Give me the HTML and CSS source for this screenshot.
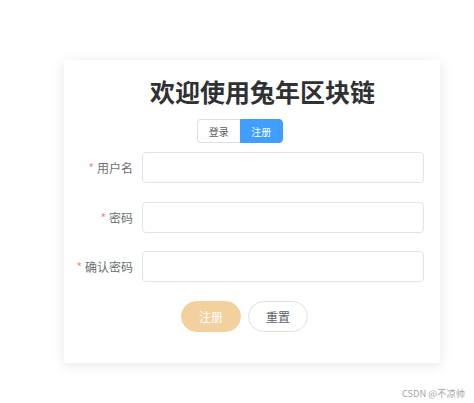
FILE: index.html
```html
<!DOCTYPE html>
<html lang="zh-CN">
<head>
<meta charset="utf-8">
<title>欢迎使用兔年区块链</title>
<link rel="stylesheet" href="styles.css">
</head>
<body>
<div class="card">
  <h1 class="title">欢迎使用兔年区块链</h1>
  <div class="tabs">
    <div class="tab tab-left">登录</div>
    <div class="tab tab-right active">注册</div>
  </div>
  <div class="form">
    <div class="row">
      <label class="label"><span class="req">*</span>用户名</label>
      <div class="input"></div>
    </div>
    <div class="row">
      <label class="label"><span class="req">*</span>密码</label>
      <div class="input"></div>
    </div>
    <div class="row">
      <label class="label"><span class="req">*</span>确认密码</label>
      <div class="input"></div>
    </div>
    <div class="actions">
      <button class="btn btn-primary" type="button">注册</button>
      <button class="btn btn-plain" type="button">重置</button>
    </div>
  </div>
</div>
<div class="watermark">CSDN @不凉帅</div>
</body>
</html>
```
FILE: styles.css
```css
html, body {
  margin: 0;
  padding: 0;
  background: #fff;
  font-family: "Noto Sans CJK SC", "Noto Sans", sans-serif;
}
.card {
  margin: 60px 0 0 64px;
  width: 376px;
  height: 303px;
  box-sizing: border-box;
  background: #fff;
  box-shadow: 0 2px 12px rgba(0, 0, 0, 0.1);
  padding-top: 19px;
}
.title {
  margin: 0;
  font-size: 25px;
  line-height: 25px;
  font-weight: 700;
  color: #303133;
  text-align: center;
  padding-left: 21px;
}
.tabs {
  display: flex;
  margin: 15px 0 0 133px;
  width: 86px;
  height: 24px;
}
.tab {
  flex: 1;
  display: flex;
  align-items: center;
  justify-content: center;
  font-size: 10px;
  color: #606266;
  background: #fff;
  border: 1px solid #dcdfe6;
  box-sizing: border-box;
}
.tab-left {
  border-right: none;
  border-radius: 4px 0 0 4px;
}
.tab-right {
  border-radius: 0 4px 4px 0;
}
.tab.active {
  background: #409eff;
  border-color: #409eff;
  color: #fff;
}
.form {
  margin-top: 9px;
  display: flex;
  flex-direction: column;
  gap: 18.5px;
}
.row {
  display: flex;
  align-items: center;
  height: 31px;
}
.label {
  width: 78px;
  box-sizing: border-box;
  padding-right: 9px;
  text-align: right;
  font-size: 12px;
  color: #6c6e73;
}
.req {
  color: #f78989;
  margin-right: 3px;
}
.input {
  width: 282px;
  height: 31px;
  box-sizing: border-box;
  border: 1px solid #e0e3e9;
  border-radius: 4px;
  background: #fff;
}
.actions {
  display: flex;
  gap: 7px;
  padding-left: 117px;
}
.btn {
  width: 60px;
  height: 31px;
  border-radius: 16px;
  font-size: 12px;
  font-family: inherit;
  padding: 0;
  box-sizing: border-box;
}
.btn-primary {
  background: #f3d19e;
  border: 1px solid #f3d19e;
  color: #fff;
}
.btn-plain {
  background: #fff;
  border: 1px solid #dcdfe6;
  color: #606266;
}
.watermark {
  margin-top: 24px;
  text-align: right;
  padding-right: 9px;
  font-size: 9.3px;
  line-height: 12px;
  color: #a3a3a3;
}
```
